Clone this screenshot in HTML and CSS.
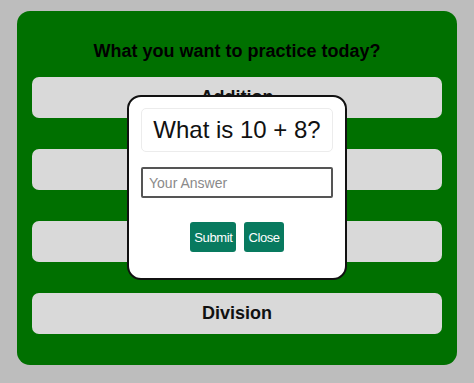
FILE: index.html
```html
<!DOCTYPE html>
<html>
<head>
<meta charset="utf-8">
<link rel="stylesheet" href="styles.css">
</head>
<body>
<div class="card">
  <h2 class="title">What you want to practice today?</h2>
  <div class="options">
    <button class="opt">Addition</button>
    <button class="opt">Subtraction</button>
    <button class="opt">Multiplication</button>
    <button class="opt">Division</button>
  </div>
</div>
<div class="modal">
  <div class="question">What is 10 + 8?</div>
  <input class="answer" type="text" placeholder="Your Answer">
  <div class="actions">
    <button class="act">Submit</button>
    <button class="act">Close</button>
  </div>
</div>
</body>
</html>
```
FILE: styles.css
```css
html, body {
  margin: 0;
  padding: 0;
}
body {
  background: #bdbdbd;
  font-family: "Liberation Sans", Arial, sans-serif;
  width: 474px;
  height: 383px;
  overflow: hidden;
  position: relative;
}
.card {
  margin: 11px 0 0 17px;
  width: 440px;
  height: 354px;
  box-sizing: border-box;
  background: #007000;
  border-radius: 13px;
  padding: 29px 15px 0 15px;
}
.title {
  margin: 0;
  font-size: 18px;
  line-height: 22px;
  font-weight: bold;
  text-align: center;
  color: #000;
}
.options {
  margin-top: 15px;
  display: flex;
  flex-direction: column;
  gap: 31px;
}
.opt {
  height: 41px;
  border: none;
  border-radius: 7px;
  background: #d9d9d9;
  font-family: "Liberation Sans", Arial, sans-serif;
  font-size: 18px;
  font-weight: bold;
  color: #111;
  padding: 0;
}
.modal {
  position: absolute;
  left: 127px;
  top: 95px;
  width: 220px;
  height: 185px;
  box-sizing: border-box;
  background: #fff;
  border: 2px solid #111;
  border-radius: 14px;
  padding: 11px 12px 0 12px;
  display: flex;
  flex-direction: column;
}
.question {
  height: 44px;
  box-sizing: border-box;
  border: 1px solid #ececec;
  border-radius: 5px;
  font-size: 24px;
  line-height: 42px;
  text-align: center;
  color: #111;
}
.answer {
  margin-top: 15px;
  width: 192px;
  height: 31px;
  box-sizing: border-box;
  border: 2px solid #555;
  border-radius: 2px;
  padding: 0 6px;
  font-family: "Liberation Sans", Arial, sans-serif;
  font-size: 14px;
  outline: none;
}
.answer::placeholder {
  color: #8a8a8a;
}
.actions {
  margin-top: 24px;
  display: flex;
  justify-content: center;
  gap: 8px;
}
.act {
  height: 30px;
  padding: 0 4px;
  border: none;
  border-radius: 3px;
  background: #087a5f;
  color: #fff;
  font-family: "Liberation Sans", Arial, sans-serif;
  font-size: 13px;
  letter-spacing: -0.4px;
}
```
